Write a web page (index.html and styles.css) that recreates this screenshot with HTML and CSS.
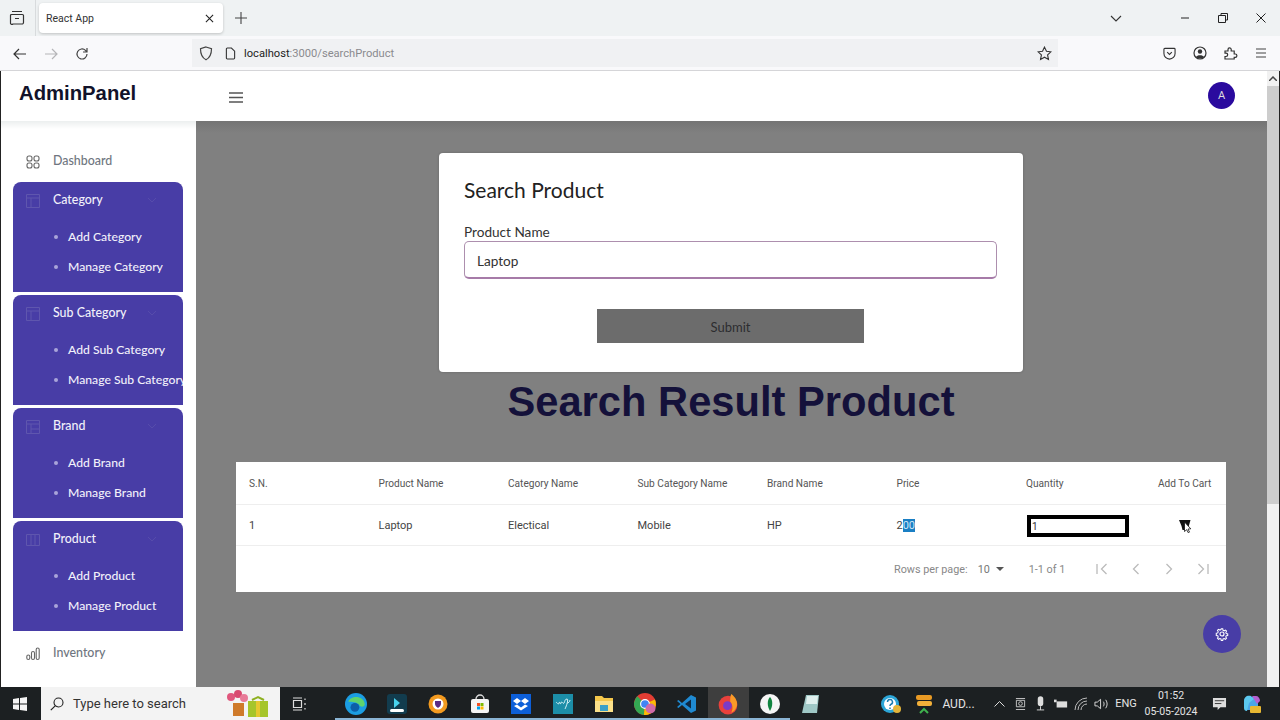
FILE: index.html
```html
<!DOCTYPE html>
<html lang="en">
<head>
<meta charset="utf-8">
<title>React App</title>
<link rel="stylesheet" href="styles.css">
</head>
<body>
<div class="screen">
  <div class="tabbar">
    <svg class="tabs-icon" viewBox="0 0 16 16" width="16" height="16"><path d="M3 1.500h10M1.500 5.500a1 1 0 0 1 1-1h11a1 1 0 0 1 1 1v7a1.500 1.500 0 0 1-1.500 1.500h-9A1.500 1.500 0 0 1 1.500 12.500zM6 8.500h4" fill="none" stroke="#333" stroke-width="1.200"/></svg>
    <div class="tab-sep"></div>
    <div class="tab"><span>React App</span><svg viewBox="0 0 10 10" width="9" height="9"><path d="M1 1l8 8M9 1l-8 8" stroke="#222" stroke-width="1.200"/></svg></div>
    <svg class="newtab" viewBox="0 0 12 12" width="12" height="12"><path d="M6 0v12M0 6h12" stroke="#444" stroke-width="1.100"/></svg>
    <div class="spacer"></div>
    <svg class="win-chev" viewBox="0 0 12 7" width="12" height="7"><path d="M1 1l5 5 5-5" fill="none" stroke="#333" stroke-width="1.100"/></svg>
    <div class="win-btns">
      <svg viewBox="0 0 10 10" width="10" height="10"><path d="M1 5h8" stroke="#222"/></svg>
      <svg viewBox="0 0 10 10" width="10" height="10"><path d="M3 2.500V.5h6.500V7H7.500M.5 2.500h7v7h-7z" fill="none" stroke="#222"/></svg>
      <svg viewBox="0 0 10 10" width="10" height="10"><path d="M.5.5l9 9M9.500.5l-9 9" stroke="#222"/></svg>
    </div>
  </div>
  <div class="toolbar">
    <div class="nav-btns">
      <svg viewBox="0 0 14 12" width="14" height="12"><path d="M13 6H1M6 1L1 6l5 5" fill="none" stroke="#333" stroke-width="1.200"/></svg>
      <svg viewBox="0 0 14 12" width="14" height="12"><path d="M1 6h12M8 1l5 5-5 5" fill="none" stroke="#b5b5b8" stroke-width="1.200"/></svg>
      <svg viewBox="0 0 14 14" width="14" height="14"><path d="M12 7a5 5 0 1 1-1.500-3.600L12 5M12 1v4H8" fill="none" stroke="#444" stroke-width="1.200"/></svg>
    </div>
    <div class="urlbar">
      <svg viewBox="0 0 14 15" width="14" height="15"><path d="M7 1l5.500 1.800c0 5-1.500 9-5.500 11C3 11.800 1.500 7.800 1.500 2.800z" fill="none" stroke="#444" stroke-width="1.200"/></svg>
      <svg viewBox="0 0 12 14" width="11" height="13"><path d="M1.500 2a1 1 0 0 1 1-1H7l3.500 3.500V12a1 1 0 0 1-1 1h-7a1 1 0 0 1-1-1z" fill="none" stroke="#333" stroke-width="1.200"/></svg>
      <span class="url"><b>localhost</b>:3000/searchProduct</span>
      <div class="spacer"></div>
      <svg viewBox="0 0 16 16" width="15" height="15"><path d="M8 1.200l2.100 4.400 4.700.6-3.500 3.300.9 4.800L8 12l-4.200 2.300.9-4.800L1.200 6.200l4.700-.6z" fill="none" stroke="#333" stroke-width="1.200"/></svg>
    </div>
    <div class="tool-icons">
      <svg viewBox="0 0 14 14" width="13" height="13"><path d="M1 2.500a1 1 0 0 1 1-1h10a1 1 0 0 1 1 1V7a6 6 0 0 1-12 0zM4.500 5.500L7 8l2.500-2.500" fill="none" stroke="#333" stroke-width="1.200"/></svg>
      <svg viewBox="0 0 14 14" width="14" height="14"><circle cx="7" cy="7" r="6" fill="none" stroke="#333" stroke-width="1.200"/><circle cx="7" cy="5.500" r="2.200" fill="#333"/><path d="M3 11c1-2.500 7-2.500 8 0-2 2-6 2-8 0z" fill="#333"/></svg>
      <svg viewBox="0 0 14 14" width="14" height="14"><path d="M1 5h3V3.500a1.600 1.600 0 0 1 3.200 0V5h3v3h1a1.700 1.700 0 0 1 0 3.400h-1V13H1v-2.500h1a1.700 1.700 0 0 0 0-3.400H1z" fill="none" stroke="#333" stroke-width="1.200"/></svg>
      <svg viewBox="0 0 12 10" width="12" height="10"><path d="M1 1h10M1 5h10M1 9h10" stroke="#444" stroke-width="1.200"/></svg>
    </div>
  </div>
  <div class="page">
    <div class="app">
      <header class="topbar">
        <div class="brand">AdminPanel</div>
        <svg class="burger" viewBox="0 0 14 11" width="14" height="11"><path d="M0 1h14M0 5.500h14M0 10h14" stroke="#555" stroke-width="1.400"/></svg>
        <div class="spacer"></div>
        <div class="avatar">A</div>
      </header>
      <div class="body">
        <aside class="sidebar">
          <div class="item top-item">
            <svg viewBox="0 0 14 14" width="14" height="14"><g fill="none" stroke="#666" stroke-width="1.100"><rect x="1" y="1" width="5" height="5" rx="2"/><rect x="8" y="1" width="5" height="5" rx="2"/><rect x="1" y="8" width="5" height="5" rx="2"/><rect x="8" y="8" width="5" height="5" rx="2"/></g></svg>
            <span>Dashboard</span>
          </div>
          <div class="group">
            <div class="item">
              <svg class="group-icon" viewBox="0 0 14 14" width="14" height="14"><path d="M.5.5h13v13H.5zM.5 4h13M5 4v9.500" fill="none" stroke="#5f56ae"/></svg>
              <span>Category</span>
              <svg class="chev" viewBox="0 0 10 6" width="10" height="6"><path d="M1 1l4 4 4-4" fill="none" stroke="#564cab"/></svg>
            </div>
            <div class="sub">Add Category</div>
            <div class="sub">Manage Category</div>
          </div>
          <div class="group">
            <div class="item">
              <svg class="group-icon" viewBox="0 0 14 14" width="14" height="14"><path d="M.5.5h13v13H.5zM.5 4h13M5 4v9.500" fill="none" stroke="#5f56ae"/></svg>
              <span>Sub Category</span>
              <svg class="chev" viewBox="0 0 10 6" width="10" height="6"><path d="M1 1l4 4 4-4" fill="none" stroke="#564cab"/></svg>
            </div>
            <div class="sub">Add Sub Category</div>
            <div class="sub">Manage Sub Category</div>
          </div>
          <div class="group">
            <div class="item">
              <svg class="group-icon" viewBox="0 0 14 14" width="14" height="14"><path d="M.5.5h13v13H.5zM.5 4h13M5 4v9.500M5 9h8.500" fill="none" stroke="#5f56ae"/></svg>
              <span>Brand</span>
              <svg class="chev" viewBox="0 0 10 6" width="10" height="6"><path d="M1 1l4 4 4-4" fill="none" stroke="#564cab"/></svg>
            </div>
            <div class="sub">Add Brand</div>
            <div class="sub">Manage Brand</div>
          </div>
          <div class="group">
            <div class="item">
              <svg class="group-icon" viewBox="0 0 14 12" width="14" height="12"><path d="M.5.500h13v11H.5zM5 .5v11M9 .5v11" fill="none" stroke="#5f56ae"/></svg>
              <span>Product</span>
              <svg class="chev" viewBox="0 0 10 6" width="10" height="6"><path d="M1 1l4 4 4-4" fill="none" stroke="#564cab"/></svg>
            </div>
            <div class="sub">Add Product</div>
            <div class="sub">Manage Product</div>
          </div>
          <div class="item top-item inventory">
            <svg viewBox="0 0 14 14" width="14" height="14"><g fill="none" stroke="#666" stroke-width="1.100"><rect x=".8" y="8" width="3" height="4.500" rx="1.500"/><rect x="5.500" y="4.500" width="3" height="8" rx="1.500"/><rect x="10.200" y="1" width="3" height="11.500" rx="1.500"/></g></svg>
            <span>Inventory</span>
          </div>
        </aside>
        <main class="main">
          <section class="card">
            <h2>Search Product</h2>
            <label>Product Name</label>
            <div class="input">Laptop</div>
            <div class="submit">Submit</div>
          </section>
          <h1>Search Result Product</h1>
          <section class="table">
            <div class="row head">
              <div>S.N.</div><div>Product Name</div><div>Category Name</div><div>Sub Category Name</div><div>Brand Name</div><div>Price</div><div>Quantity</div><div class="last">Add To Cart</div>
            </div>
            <div class="row data">
              <div>1</div><div>Laptop</div><div>Electical</div><div>Mobile</div><div>HP</div><div>2<span class="sel">00</span></div><div><div class="qty">1</div></div>
              <div class="last"><svg viewBox="0 0 14 14" width="14" height="14"><path d="M1 1h11.500l-1.800 6.500-1.200 3.500H4.500L3.500 7z" fill="#111"/><path d="M6.500 3v9.500l2.200-1.800 1.500 3 1.300-.6-1.500-3 2.800-.3z" fill="#fff" stroke="#111" stroke-width=".8"/></svg></div>
            </div>
            <div class="pager">
              <span class="rows">Rows per page:</span>
              <span class="size">10</span>
              <svg viewBox="0 0 8 4" width="8" height="4"><path d="M0 0h8L4 4z" fill="#555"/></svg>
              <span class="range">1-1 of 1</span>
              <div class="pager-btns">
                <svg viewBox="0 0 12 12" width="12" height="12"><path d="M1 1v10M10.500 1l-5 5 5 5" fill="none" stroke="#bbb" stroke-width="1.300"/></svg>
                <svg viewBox="0 0 12 12" width="12" height="12"><path d="M8.500 1l-5 5 5 5" fill="none" stroke="#bbb" stroke-width="1.300"/></svg>
                <svg viewBox="0 0 12 12" width="12" height="12"><path d="M3.500 1l5 5-5 5" fill="none" stroke="#bbb" stroke-width="1.300"/></svg>
                <svg viewBox="0 0 12 12" width="12" height="12"><path d="M11 1v10M1.500 1l5 5-5 5" fill="none" stroke="#bbb" stroke-width="1.300"/></svg>
              </div>
            </div>
          </section>
          <div class="fab"><svg viewBox="0 0 16 16" width="14" height="14"><circle cx="8" cy="8" r="2.300" fill="none" stroke="#fff" stroke-width="1.300"/><path d="M7 1h2l.4 2 1.500.7 1.800-1 1.400 1.500-1 1.700.6 1.600 2 .5v2l-2 .4-.6 1.500 1 1.800-1.400 1.400-1.800-1-1.500.6-.4 2H7l-.4-2-1.500-.6-1.800 1-1.400-1.400 1-1.800-.6-1.500-2-.4V7l2-.5.6-1.600-1-1.700 1.400-1.500 1.800 1 1.500-.7z" transform="translate(1.200 1.200) scale(.85)" fill="none" stroke="#fff" stroke-width="1.400"/></svg></div>
        </main>
      </div>
    </div>
    <div class="scrollbar">
      <svg viewBox="0 0 8 5" width="8" height="5"><path d="M0 5l4-4 4 4" fill="none" stroke="#444" stroke-width="1.500"/></svg>
      <div class="thumb"></div>
    </div>
  </div>
  <footer class="taskbar">
    <svg class="start" viewBox="0 0 14 14" width="14" height="14"><path d="M0 2l6-.9V6.600H0zM7 1l7-1v6.600H7zM0 7.400h6v5.500l-6-.9zM7 7.400h7V14l-7-1z" fill="#f4f4f4"/></svg>
    <div class="search">
      <svg viewBox="0 0 14 14" width="14" height="14"><circle cx="8.500" cy="5.500" r="4.500" fill="none" stroke="#222" stroke-width="1.100"/><path d="M5.200 8.800L.8 13.200" stroke="#222" stroke-width="1.200"/></svg>
      <span>Type here to search</span>
      <div class="spacer"></div>
      <svg viewBox="0 0 46 28" width="46" height="28"><circle cx="7" cy="7" r="4" fill="#e0577d"/><circle cx="14" cy="4" r="4" fill="#d84a70"/><circle cx="20" cy="8" r="4" fill="#e87a98"/><rect x="9" y="13" width="11" height="13" fill="#cf7a2a"/><rect x="24" y="11" width="20" height="16" fill="#a6c52b"/><rect x="32" y="11" width="4" height="16" fill="#e6c830"/><path d="M28 10l6-3 6 3" fill="none" stroke="#8eb020" stroke-width="2"/></svg>
    </div>
    <svg class="taskview" viewBox="0 0 16 14" width="16" height="14"><path d="M1 1h9M1 13h9M1.500 3.500h8v7h-8zM13 1.500v1.500M13 6v2M13 11v1.500" fill="none" stroke="#ddd" stroke-width="1.200"/></svg>
    <div class="apps">
      <div class="app-ico on"><svg viewBox="0 0 20 20" width="22" height="22"><circle cx="10" cy="10" r="10" fill="#1b9de2"/><path d="M3 8c2-6 14-6 15 2 0 3-4 3-5 1-2-3-7-3-10-3z" fill="#5fd36d"/><circle cx="9" cy="13" r="4" fill="#0d5fa8"/></svg></div>
      <div class="app-ico on"><svg viewBox="0 0 20 20" width="20" height="20"><rect width="20" height="20" rx="3" fill="#123c4e"/><path d="M7 4l6 5-6 5z" fill="#49d4ef"/><rect x="3" y="15" width="14" height="3" rx="1.500" fill="#fff"/></svg></div>
      <div class="app-ico on"><svg viewBox="0 0 20 20" width="20" height="20"><circle cx="10" cy="10" r="9.500" fill="#f39a1f"/><circle cx="10" cy="10" r="5.500" fill="#fff"/><path d="M7 7h6v3c0 2-2 3-3 4-1-1-3-2-3-4z" fill="#5a2c86"/></svg></div>
      <div class="app-ico on"><svg viewBox="0 0 20 20" width="20" height="20"><path d="M6 5a4 4 0 0 1 8 0" fill="none" stroke="#ddd" stroke-width="1.300"/><rect x="1" y="5" width="18" height="14" rx="2" fill="#f5f5f5"/><rect x="7" y="9" width="3" height="3" fill="#f25022"/><rect x="10.500" y="9" width="3" height="3" fill="#7fba00"/><rect x="7" y="12.500" width="3" height="3" fill="#00a4ef"/><rect x="10.500" y="12.500" width="3" height="3" fill="#ffb900"/></svg></div>
      <div class="app-ico on"><svg viewBox="0 0 20 20" width="20" height="20"><rect width="20" height="20" fill="#0d5fd8"/><path d="M6 4l4 3-4 3-4-3zM14 4l4 3-4 3-4-3zM6 10.500l4 3 4-3 3 1.500-7 4.500-7-4.500z" fill="#fff"/></svg></div>
      <div class="app-ico on"><svg viewBox="0 0 20 20" width="20" height="20"><rect width="20" height="20" fill="#1c8ea8"/><path d="M3 9c1-2 2 3 3 0s1 3 2 0 2 2 3 0 1-4 3-4-1 8-2 10M14 9c1 0 3-1 3-3" fill="none" stroke="#d8f4f8" stroke-width="1"/></svg></div>
      <div class="app-ico on"><svg viewBox="0 0 20 18" width="20" height="18"><path d="M1 1h7l2 2h9v14H1z" fill="#f5c84c"/><rect x="1" y="6" width="18" height="11" fill="#fbe18a"/><rect x="6" y="10" width="8" height="6" fill="#3aa0c8"/></svg></div>
      <div class="app-ico on"><svg viewBox="0 0 20 20" width="22" height="22"><circle cx="10" cy="10" r="10" fill="#e23d33"/><path d="M10 10l-7-7A10 10 0 0 0 9 20z" fill="#34a853"/><path d="M10 10l9-4a10 10 0 0 1-10 14z" fill="#fbbc05"/><circle cx="10" cy="10" r="4" fill="#4285f4" stroke="#fff"/><circle cx="15" cy="14" r="4.500" fill="#d06aa8"/></svg></div>
      <div class="app-ico on"><svg viewBox="0 0 20 20" width="20" height="20"><path d="M14 1l5 2.500v13L14 19 5 11l-3.500 3L0 13l3.500-3L0 7l1.500-1L5 9z" fill="#1f8ad2"/><path d="M14 5.500v9L8 10z" fill="#0e2a45"/></svg></div>
      <div class="app-ico active on"><svg viewBox="0 0 20 20" width="22" height="22"><circle cx="10" cy="11" r="8.500" fill="#e8413c"/><path d="M13 1c4 3 6 7 5 11-1 3-3 5-5 6 2-4 1-8-1-10 0-3 0-5 1-7z" fill="#fa9a27"/><circle cx="9.500" cy="11.500" r="4" fill="#7b3bc8"/></svg></div>
      <div class="app-ico on"><svg viewBox="0 0 20 20" width="20" height="20"><circle cx="10" cy="10" r="10" fill="#f5f5f5"/><path d="M10 3c3 3 3 9 0 14-3-5-3-11 0-14z" fill="#10843f"/></svg></div>
      <div class="app-ico"><svg viewBox="0 0 20 20" width="20" height="20"><path d="M5 1h13l-2 18H1z" fill="#9fc8c6"/><path d="M6 2h11l-1 8H5z" fill="#dff0ee"/></svg></div>
    </div>
    <div class="spacer"></div>
    <div class="tray">
      <svg class="tray-help" viewBox="0 0 20 20" width="20" height="20"><circle cx="9" cy="10" r="9" fill="#2ca6d8"/><circle cx="9" cy="10" r="6" fill="#fff"/><path d="M6.500 8a2.500 2.500 0 1 1 3.500 2.300c-.7.300-1 .8-1 1.700M9 13.500v1.500" fill="none" stroke="#1b7cb0" stroke-width="1.500"/><circle cx="16" cy="15" r="4" fill="#e5b53a"/></svg>
      <svg class="tray-aud" viewBox="0 0 20 20" width="20" height="20"><rect x="2" y="1" width="16" height="5" rx="2" fill="#e99a24"/><rect x="3" y="7" width="15" height="5" rx="2" fill="#f2b03a"/><path d="M6 19l4-4 4 4" fill="none" stroke="#3fb34f" stroke-width="2"/></svg>
      <span class="aud">AUD...</span>
      <div class="tray-icons">
        <svg viewBox="0 0 11 6" width="11" height="6"><path d="M.5 5.500L5.500.5l5 5" fill="none" stroke="#ddd"/></svg>
        <svg viewBox="0 0 12 14" width="11" height="14"><path d="M1 1h10M1.500 3h9v7h-9zM1 13h10" fill="none" stroke="#ccc"/><circle cx="6" cy="6.500" r="2" fill="none" stroke="#ccc"/></svg>
        <svg viewBox="0 0 12 16" width="11" height="15"><rect x="3" y="0" width="6" height="11" rx="3" fill="#ddd"/><path d="M6 11v4M2 15h8" stroke="#ddd"/></svg>
        <svg viewBox="0 0 16 10" width="14" height="10"><rect x="3" y="2" width="12" height="7" fill="#ddd"/><rect x="0" y="0" width="3" height="3" fill="#ddd"/></svg>
        <svg viewBox="0 0 14 14" width="14" height="14"><path d="M1 13A12 12 0 0 1 13 1M4 13a9 9 0 0 1 9-9M7 13a6 6 0 0 1 6-6" fill="none" stroke="#bbb"/></svg>
        <svg viewBox="0 0 16 14" width="15" height="14"><path d="M1 5h2.500L7 2v10L3.500 9H1zM10 4.500c1 1.500 1 3.500 0 5M12.500 2.500c2 3 2 6 0 9" fill="none" stroke="#ddd"/></svg>
      </div>
      <span class="lang">ENG</span>
      <div class="clock"><span>01:52</span><span>05-05-2024</span></div>
      <svg class="notif" viewBox="0 0 16 15" width="15" height="14"><path d="M1 1h14v10H9l-3 3v-3H1z" fill="#ddd"/><path d="M3 4h10M3 7h7" stroke="#333"/></svg>
      <svg class="copilot" viewBox="0 0 20 20" width="20" height="20"><path d="M4 3h8l4 4v9H4z" fill="#4aa6e8"/><path d="M2 7c0-4 3-6 7-5l3 3-5 4-2 8c-2 0-3-1-3-3z" fill="#5cc8f0"/><path d="M10 2h4c2 0 4 2 4 5l-3 3z" fill="#b45fd0"/><rect x="8" y="12" width="11" height="7" rx="1" fill="#e8b832"/></svg>
    </div>
  </footer>
</div>
</body>
</html>
```

FILE: styles.css
```css
* { box-sizing: border-box; }
html, body { margin: 0; height: 100%; overflow: hidden; }
body { font-family: "Open Sans", "Liberation Sans", sans-serif; color: #222; }
svg { display: block; flex: none; }
.spacer { flex: 1; }
.screen { width: 1280px; height: 720px; display: flex; flex-direction: column; overflow: hidden; background: #808080; }

.tabbar { height: 36px; flex: none; display: flex; align-items: center; background: #eff2f3; padding: 0 13px 0 9px; }
.tab-sep { width: 1px; height: 36px; background: #d8dbdd; margin-left: 10px; margin-right: 3px; }
.tab { width: 184px; height: 30px; background: #fff; border-radius: 4px; box-shadow: 0 1px 3px rgba(0,0,0,.2); display: flex; align-items: center; justify-content: space-between; padding: 0 9px 0 7px; font-size: 10.500px; color: #333; font-family: Roboto, sans-serif; }
.newtab { margin-left: 12px; }
.win-chev { margin-right: 58px; }
.win-btns { display: flex; gap: 28px; margin-right: 1px; }

.toolbar { height: 35px; flex: none; display: flex; align-items: center; background: #f9f9fb; border-bottom: 1px solid #d5d5d8; padding-left: 13px; }
.nav-btns { display: flex; align-items: center; gap: 17px; width: 179px; margin-top: 1px; }
.urlbar { width: 866px; height: 28px; background: #f0f1f3; display: flex; align-items: center; padding: 0 6px 0 7px; gap: 12px; }
.url { font-size: 11.150px; font-family: Roboto, sans-serif; color: #8a8a8e; margin-left: -4px; margin-top: 1px; }
.url b { font-weight: 400; color: #222; }
.tool-icons { display: flex; align-items: center; gap: 17px; margin-left: 105px; }

.page { height: 616px; flex: none; display: flex; overflow: hidden; }
.app { flex: 1; min-width: 0; display: flex; flex-direction: column; border-left: 1px solid #222; }
.topbar { height: 50px; flex: none; display: flex; align-items: center; background: #fff; position: relative; z-index: 1; padding: 0 32px 0 18px; }
.brand { font-family: "Liberation Sans", sans-serif; font-weight: 700; font-size: 20.300px; color: #12122a; width: 210px; margin-top: -5px; }
.burger { margin-top: 3px; }
.avatar { width: 27px; height: 27px; border-radius: 50%; background: #2a0a9e; color: #ddd; font-size: 11px; display: flex; align-items: center; justify-content: center; margin-top: -2px; font-family: Roboto, sans-serif; }
.body { flex: 1; display: flex; min-height: 0; }

.sidebar { width: 195px; flex: none; background: linear-gradient(#ecefef 0, #fff 8px); padding: 21px 13px 0 12px; overflow: hidden; font-family: Lato, sans-serif; font-size: 12.400px; font-weight: 500; }
.item { display: flex; align-items: center; height: 36px; padding-left: 13px; gap: 13px; color: #fff; }
.item span { flex: 1; }
.top-item { color: #6f7680; height: 36px; }
.top-item svg { margin-top: 4px; }
.group { height: 110px; background: #483da6; border-radius: 8px 8px 0 0; margin-bottom: 3px; overflow: hidden; color: #f2f1fa; white-space: nowrap; }
.top-item + .group { margin-top: 4px; }
.group .item { color: #f2f1fa; height: 35px; }
.group-icon { margin-top: 2px; }
.chev { margin-right: 26px; }
.sub { height: 30px; padding-left: 55px; position: relative; line-height: 30px; font-size: 12.200px; }
.sub:nth-child(2) { margin-top: 5px; }
.sub::before { content: ""; position: absolute; left: 41px; top: 13px; width: 4px; height: 4px; border-radius: 50%; background: #a9a4da; }
.inventory { height: 36px; }

.main { flex: 1; min-width: 0; position: relative; display: flex; flex-direction: column; align-items: center; background: linear-gradient(#747474 0, #808080 12px); padding: 32px 1px 0 0; }
.card { width: 584px; height: 219px; flex: none; background: #fff; border-radius: 4px; padding: 23px 26px 0 25px; box-shadow: 0 0 3px rgba(0,0,0,.2); font-family: Lato, sans-serif; }
.card h2 { margin: 0; font-size: 21px; font-weight: 400; line-height: 28px; color: #222; }
.card label { display: block; margin-top: 19px; font-size: 13.600px; line-height: 18px; color: #333; }
.input { height: 38px; border: 1px solid #ad8fae; border-bottom: 2px solid #a67ba8; border-radius: 5px; padding: 0 12px; line-height: 38px; font-size: 13.600px; color: #333; }
.submit { width: 267px; height: 34px; margin: 30px 0 0 133px; background: #6c6c6c; color: #2c2c30; text-align: center; font-size: 13px; line-height: 36px; }
.main h1 { margin: 7px 0 37px; font-family: "Liberation Sans", sans-serif; font-weight: 700; font-size: 41.700px; line-height: 46px; color: #14113a; white-space: nowrap; }

.table { width: 990px; height: 130px; flex: none; background: #fff; font-family: Roboto, sans-serif; font-size: 10.150px; color: #555; }
.row { display: grid; grid-template-columns: 129.500px 129.500px 129.500px 129.500px 129.500px 129.500px 132px 1fr; padding-left: 13px; align-items: center; border-bottom: 1px solid #eee; }
.head { height: 43px; }
.data { height: 41px; padding-top: 1px; font-size: 11px; color: #444; }
.last { text-align: center; display: flex; justify-content: center; padding-right: 15px; white-space: nowrap; }
.sel { background: #1a7fc4; color: #cfe6f5; }
.qty { width: 102px; height: 22px; margin-left: 1px; border: 4px solid #000; font-size: 10px; line-height: 15px; padding-left: 1px; color: #333; }
.pager { height: 46px; display: flex; align-items: center; padding-left: 658px; font-size: 10.800px; color: #888; }
.size { margin-left: 10px; margin-right: 6px; color: #777; }
.range { margin-left: 25px; }
.pager-btns { display: flex; gap: 21.500px; margin-left: 31px; }

.fab { position: absolute; left: 1007px; top: 494px; width: 38px; height: 38px; border-radius: 50%; background: #483da6; display: flex; align-items: center; justify-content: center; }

.scrollbar { width: 13px; flex: none; background: #f1f1f1; display: flex; flex-direction: column; align-items: center; padding-top: 5px; border-right: 1px solid #222; }
.thumb { width: 12px; height: 418px; margin-top: 5px; background: #cdcdcd; }

.taskbar { height: 33px; flex: none; display: flex; align-items: center; background: #1c2022; padding-left: 13px; color: #ddd; }
.search { width: 239px; height: 33px; margin-left: 14px; background: #f3f3f3; display: flex; align-items: center; padding: 0 10px 0 9px; color: #333; font-family: Roboto, sans-serif; font-size: 13px; gap: 9px; }
.taskview { margin-left: 12px; margin-right: 27px; }
.apps { display: flex; align-items: center; height: 33px; }
.app-ico { width: 41.400px; height: 33px; display: flex; align-items: center; justify-content: center; border-bottom: 2px solid transparent; padding-top: 2px; }
.app-ico.on { border-bottom-color: #8ab4d4; }
.app-ico.active { background: #3e3e3e; }
.tray { display: flex; align-items: center; font-family: Roboto, sans-serif; font-size: 11px; color: #e4e4e4; padding-right: 18px; }
.tray-aud { margin-left: 13px; }
.aud { font-size: 12px; margin-left: 8px; margin-right: 15px; white-space: nowrap; }
.tray-icons { display: grid; grid-template-columns: repeat(6, 20.400px); justify-items: center; align-items: center; margin-right: 3px; }
.lang { width: 22px; text-align: center; margin-right: 9px; }
.clock { width: 50px; display: flex; flex-direction: column; align-items: center; line-height: 16px; font-size: 10.500px; margin-right: 16px; white-space: nowrap; }
.notif { margin-right: 15px; }
```
